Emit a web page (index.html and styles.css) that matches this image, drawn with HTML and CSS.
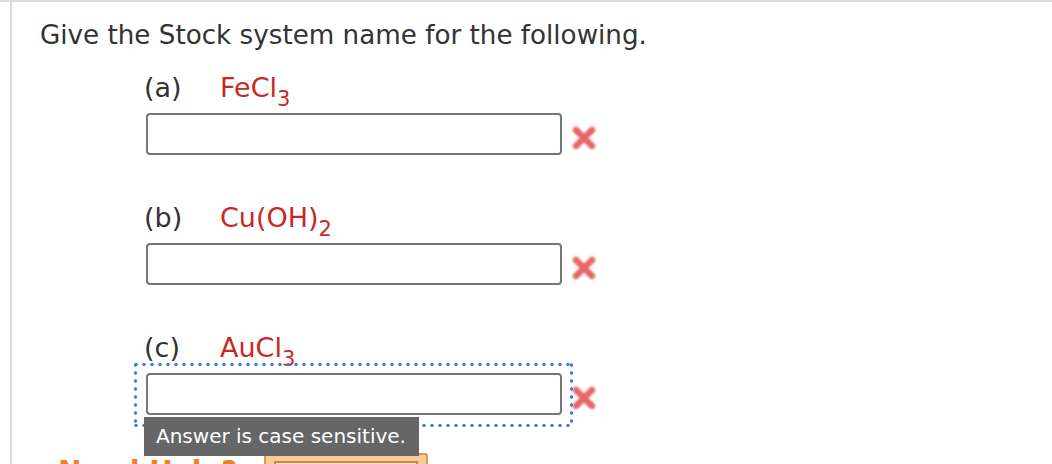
FILE: index.html
```html
<!DOCTYPE html>
<html lang="en">
<head>
<meta charset="utf-8">
<title>Stock system names</title>
<link rel="stylesheet" href="styles.css">
</head>
<body>
<div class="page">
  <div class="panel">
    <h1 class="prompt">Give the Stock system name for the following.</h1>
    <div class="items">
      <div class="item">
        <div class="label"><span class="tag">(a)</span><span class="formula">FeCl<sub class="sub">3</sub></span></div>
        <div class="field">
          <div class="input-wrap"><input class="answer" type="text" aria-label="Answer (a)"></div>
          <svg class="wrong" viewBox="0 0 26 26" width="26" height="26" aria-hidden="true">
            <defs><filter id="soft1" x="-30%" y="-30%" width="160%" height="160%"><feGaussianBlur stdDeviation="0.9"/></filter></defs>
            <g filter="url(#soft1)" stroke="#e66666" stroke-width="6.4" stroke-linecap="round">
              <line x1="5" y1="5" x2="21" y2="21"/><line x1="21" y1="5" x2="5" y2="21"/>
            </g>
          </svg>
        </div>
      </div>
      <div class="item">
        <div class="label"><span class="tag">(b)</span><span class="formula">Cu(OH)<sub class="sub">2</sub></span></div>
        <div class="field">
          <div class="input-wrap"><input class="answer" type="text" aria-label="Answer (b)"></div>
          <svg class="wrong" viewBox="0 0 26 26" width="26" height="26" aria-hidden="true">
            <defs><filter id="soft2" x="-30%" y="-30%" width="160%" height="160%"><feGaussianBlur stdDeviation="0.9"/></filter></defs>
            <g filter="url(#soft2)" stroke="#e66666" stroke-width="6.4" stroke-linecap="round">
              <line x1="5" y1="5" x2="21" y2="21"/><line x1="21" y1="5" x2="5" y2="21"/>
            </g>
          </svg>
        </div>
      </div>
      <div class="item">
        <div class="label"><span class="tag">(c)</span><span class="formula">AuCl<sub class="sub">3</sub></span></div>
        <div class="field">
          <div class="input-wrap">
            <input class="answer" type="text" aria-label="Answer (c)">
            <span class="ring" aria-hidden="true"></span>
            <span class="tooltip">Answer is case sensitive.</span>
          </div>
          <svg class="wrong" viewBox="0 0 26 26" width="26" height="26" aria-hidden="true">
            <defs><filter id="soft3" x="-30%" y="-30%" width="160%" height="160%"><feGaussianBlur stdDeviation="0.9"/></filter></defs>
            <g filter="url(#soft3)" stroke="#e66666" stroke-width="6.4" stroke-linecap="round">
              <line x1="5" y1="5" x2="21" y2="21"/><line x1="21" y1="5" x2="5" y2="21"/>
            </g>
          </svg>
        </div>
      </div>
    </div>
    <div class="help">
      <span class="help-text">Need Help?</span>
      <span class="help-btn"><span class="help-btn-inner"></span></span>
    </div>
  </div>
</div>
</body>
</html>
```

FILE: styles.css
```css
html, body {
  margin: 0;
  padding: 0;
  height: 100%;
  overflow: hidden;
  background: #fff;
}

body {
  font-family: "DejaVu Sans", Verdana, sans-serif;
  color: #333;
}

.page {
  border-top: 2px solid #dddddd;
  height: 100%;
  box-sizing: border-box;
}

.panel {
  margin-left: 10px;
  border-left: 2px solid #d9d9d9;
  padding: 18px 0 0 28px;
  height: 100%;
  box-sizing: border-box;
}

.prompt {
  margin: 0 0 23px 0;
  font-size: 26.2px;
  line-height: 30px;
  font-weight: normal;
  color: #333;
}

.items {
  display: flex;
  flex-direction: column;
  gap: 48px;
  padding-left: 104px;
}

.label {
  display: flex;
  font-size: 27px;
  line-height: 30px;
  white-space: nowrap;
}

.tag {
  width: 76px;
  flex: none;
  color: #333;
}

.formula {
  color: #c8291f;
}

.sub {
  font-size: 21px;
  line-height: 0;
  vertical-align: -9px;
}

.field {
  display: flex;
  align-items: center;
  margin-top: 10px;
}

.input-wrap {
  position: relative;
  margin-left: 2px;
  width: 416px;
  height: 42px;
}

.answer {
  display: block;
  box-sizing: border-box;
  width: 416px;
  height: 42px;
  margin: 0;
  padding: 0 8px;
  border: 2px solid #767676;
  border-radius: 4px;
  background: #fff;
  font-family: "DejaVu Sans", Verdana, sans-serif;
  font-size: 20px;
  outline: none;
}

.wrong {
  flex: none;
  margin-left: 9px;
  margin-top: 7px;
  display: block;
}

.ring {
  position: absolute;
  top: -10px;
  bottom: -12px;
  left: -12px;
  right: -11px;
  pointer-events: none;
  z-index: 2;
  background:
    radial-gradient(circle, #3b7fe0 1.4px, rgba(59, 127, 224, 0) 2px) -2px 0 / 8px 3px repeat-x,
    radial-gradient(circle, #3b7fe0 1.4px, rgba(59, 127, 224, 0) 2px) -2px 100% / 8px 3px repeat-x,
    radial-gradient(circle, #3b7fe0 1.4px, rgba(59, 127, 224, 0) 2px) 0 -2px / 3px 8px repeat-y,
    radial-gradient(circle, #3b7fe0 1.4px, rgba(59, 127, 224, 0) 2px) 100% -2px / 3px 8px repeat-y;
}

.tooltip {
  position: absolute;
  left: -2px;
  top: 44px;
  z-index: 3;
  height: 39px;
  padding: 0 13px 0 12px;
  background: #666;
  color: #fff;
  font-size: 20px;
  line-height: 39px;
  white-space: nowrap;
}

.help {
  display: flex;
  align-items: flex-start;
  gap: 26px;
  margin-top: 38px;
  padding-left: 18px;
}

.help-text {
  margin-top: 4px;
  font-size: 28px;
  line-height: 30px;
  font-weight: bold;
  color: #e8822c;
  white-space: nowrap;
}

.help-btn {
  display: block;
  width: 164px;
  height: 40px;
  box-sizing: border-box;
  padding: 6px 8px;
  border: 2px solid #d99a55;
  border-radius: 3px;
  background: #f6cc97;
}

.help-btn-inner {
  display: block;
  height: 100%;
  box-sizing: border-box;
  border: 2px solid #c8874a;
  background: #fbe2bf;
}
```
